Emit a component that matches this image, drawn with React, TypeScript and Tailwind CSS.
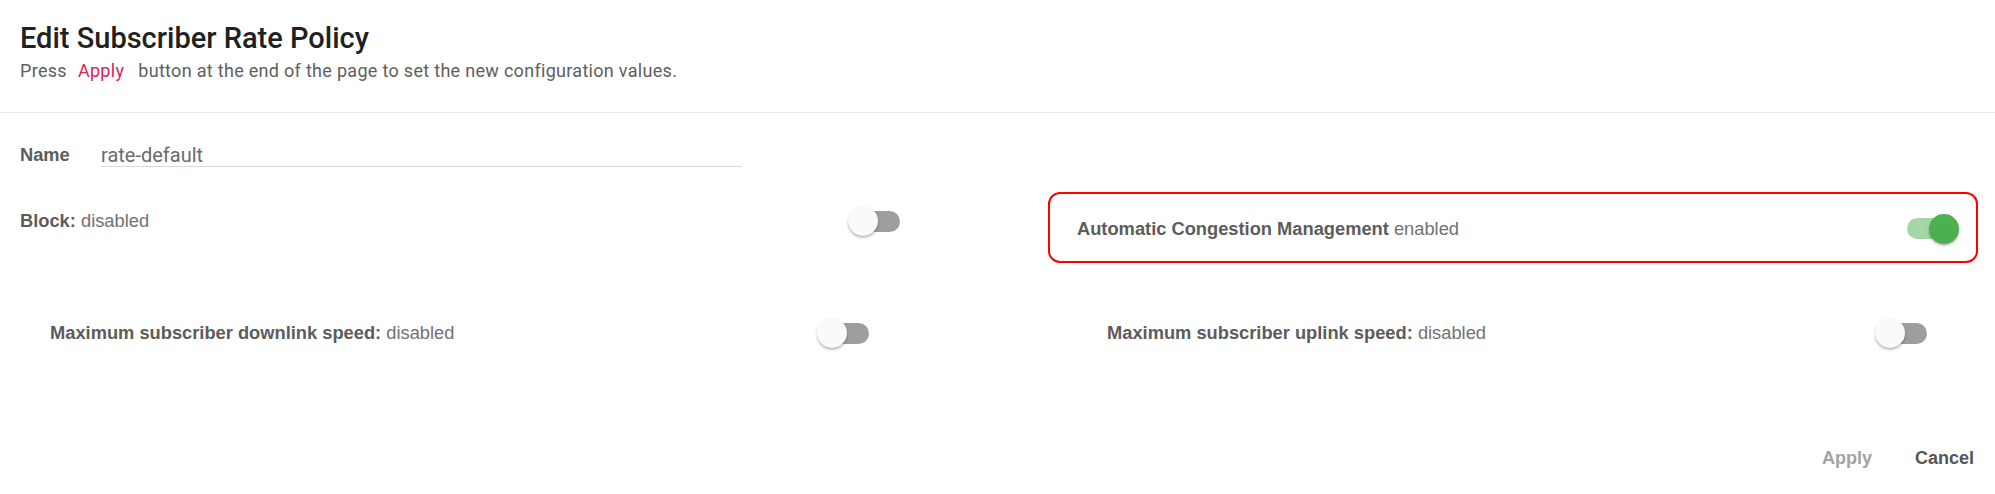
import { clsx } from "clsx";

type ToggleProps = {
    on: boolean;
};

function Toggle({ on }: ToggleProps) {
    return (
        <span className="relative inline-flex h-[30px] w-[56px] shrink-0 items-center">
            <span
                className={clsx(
                    "absolute right-[4px] left-[4px] h-[21px] rounded-full",
                    on ? "bg-[#a5d6a7]" : "bg-[#9e9e9e]"
                )}
            />
            <span
                className={clsx(
                    "absolute top-0 size-[30px] rounded-full shadow-[0_2px_3px_0_rgba(0,0,0,0.22),0_1px_1px_0_rgba(0,0,0,0.12)]",
                    on ? "right-0 bg-[#4caf50]" : "left-0 bg-[#fafafa]"
                )}
            />
        </span>
    );
}

type SettingProps = {
    label: string;
    value: string;
    on: boolean;
    className?: string;
};

function SettingRow({ label, value, on, className }: SettingProps) {
    return (
        <div className={clsx("flex items-center justify-between", className)}>
            <span className="text-[18.3px] leading-[22px]">
                <span className="font-bold text-[#5c5c5c]">{label}:</span>{" "}
                <span className="text-[#727272]">{value}</span>
            </span>
            <Toggle on={on} />
        </div>
    );
}

export default function App() {
    return (
        <div className="min-h-screen w-full bg-white font-['Liberation_Sans',Arial,sans-serif]">
            {/* header */}
            <div className="border-b border-[#ebebeb] px-[20px] pt-[21px] pb-[29px] font-['Roboto',sans-serif]">
                <h1 className="text-[29px] leading-[34px] font-medium text-[#212121]">Edit Subscriber Rate Policy</h1>
                <p className="mt-[4px] text-[18px] leading-[24px] tracking-[0.3px] text-[#5e5e5e]">
                    Press<span className="mr-[14px] ml-[11px] text-[#d6245a]">Apply</span>button at the end of the page to
                    set the new configuration values.
                </p>
            </div>

            <div className="pt-[31px]">
                <div className="flex items-start pl-[20px]">
                    <span className="w-[81px] text-[18.3px] leading-[22px] font-bold text-[#5c5c5c]">Name</span>
                    <div className="w-[641px] border-b border-[#d9d9d9] font-['Roboto',sans-serif] text-[20px] leading-[22px] text-[#6b6b6b]">
                        rate-default
                    </div>
                </div>

                <div className="mt-[25px] grid grid-cols-[884px_930px] gap-x-[144px] gap-y-[42px] pl-[20px]">
                    <SettingRow className="h-[58px] self-start" label="Block" value="disabled" on={false} />
                    <div className="flex h-[71px] items-center justify-between rounded-[12px] border-2 border-[#ff0000] pt-[2px] pr-[17px] pl-[27px]">
                        <span className="text-[18.3px] leading-[22px]">
                            <span className="font-bold text-[#5c5c5c]">Automatic Congestion Management</span>{" "}
                            <span className="text-[#727272]">enabled</span>
                        </span>
                        <Toggle on />
                    </div>

                    <SettingRow
                        className="mr-[31px] ml-[30px] h-[56px]"
                        label="Maximum subscriber downlink speed"
                        value="disabled"
                        on={false}
                    />
                    <SettingRow
                        className="mr-[47px] ml-[59px] h-[56px]"
                        label="Maximum subscriber uplink speed"
                        value="disabled"
                        on={false}
                    />
                </div>

                <div className="mt-[86px] flex justify-end gap-[43px] pr-[21px] text-[18px] leading-[22px] font-bold">
                    <button type="button" className="cursor-default text-[#a3a3a3]">
                        Apply
                    </button>
                    <button type="button" className="text-[#555555]">
                        Cancel
                    </button>
                </div>
            </div>
        </div>
    );
}
